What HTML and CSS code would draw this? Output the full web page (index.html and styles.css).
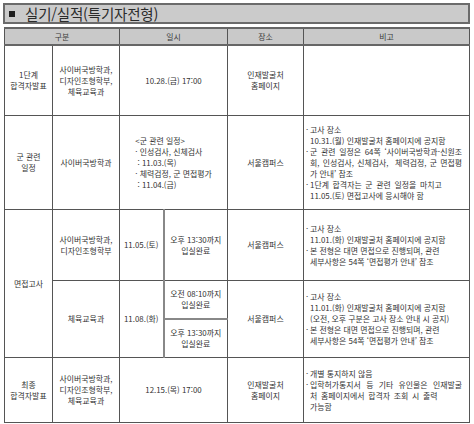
FILE: index.html
```html
<!DOCTYPE html>
<html lang="ko">
<head>
<meta charset="utf-8">
<title>실기/실적(특기자전형)</title>
<link rel="stylesheet" href="styles.css">
</head>
<body>
<div class="page">
  <div class="title"><span class="sq"></span><span class="title-text">실기/실적(특기자전형)</span></div>
  <table class="sched">
    <colgroup>
      <col class="c1"><col class="c2"><col class="c3"><col class="c4"><col class="c5"><col class="c6">
    </colgroup>
    <thead>
      <tr class="r-head">
        <th colspan="2">구분</th>
        <th colspan="2">일시</th>
        <th>장소</th>
        <th>비고</th>
      </tr>
    </thead>
    <tbody>
      <tr class="r1">
        <td>1단계<br>합격자발표</td>
        <td>사이버국방학과,<br>디자인조형학부,<br>체육교육과</td>
        <td colspan="2">10.28.(금) 17:00</td>
        <td>인재발굴처<br>홈페이지</td>
        <td class="note"></td>
      </tr>
      <tr class="r2">
        <td>군 관련<br>일정</td>
        <td>사이버국방학과</td>
        <td colspan="2"><div class="mil">
          <span class="ln">&lt;군 관련 일정&gt;</span>
          <span class="ln">· 인성검사, 신체검사</span>
          <span class="ln">&nbsp;: 11.03.(목)</span>
          <span class="ln">· 체력검정, 군 면접평가</span>
          <span class="ln">&nbsp;: 11.04.(금)</span>
        </div></td>
        <td>서울캠퍼스</td>
        <td class="note">
          <div class="li"><span class="ln"><span class="dot">·</span>고사 장소</span><span class="ln">10.31.(월) 인재발굴처 홈페이지에 공지함</span></div>
          <div class="li"><span class="ln j"><span class="dot">·</span>군 관련 일정은 64쪽 ‘사이버국방학과-신원조</span><span class="ln j">회, 인성검사, 신체검사, &nbsp;체력검정, 군 면접평</span><span class="ln">가 안내’ 참조</span></div>
          <div class="li"><span class="ln wide"><span class="dot">·</span>1단계 합격자는 군 관련 일정을 마치고</span><span class="ln">11.05.(토) 면접고사에 응시해야 함</span></div>
        </td>
      </tr>
      <tr class="r3a">
        <td rowspan="3">면접고사</td>
        <td>사이버국방학과,<br>디자인조형학부</td>
        <td>11.05.(토)</td>
        <td>오후 13:30까지<br>입실완료</td>
        <td>서울캠퍼스</td>
        <td class="note">
          <div class="li"><span class="ln"><span class="dot">·</span>고사 장소</span><span class="ln">11.01.(화) 인재발굴처 홈페이지에 공지함</span></div>
          <div class="li"><span class="ln"><span class="dot">·</span>본 전형은 대면 면접으로 진행되며, 관련</span><span class="ln">세부사항은 54쪽 ‘면접평가 안내’ 참조</span></div>
        </td>
      </tr>
      <tr class="r3b">
        <td rowspan="2">체육교육과</td>
        <td rowspan="2">11.08.(화)</td>
        <td class="split-top">오전 08:10까지<br>입실완료</td>
        <td rowspan="2">서울캠퍼스</td>
        <td rowspan="2" class="note">
          <div class="li"><span class="ln"><span class="dot">·</span>고사 장소</span><span class="ln">11.01.(화) 인재발굴처 홈페이지에 공지함</span><span class="ln">(오전, 오후 구분은 고사 장소 안내 시 공지)</span></div>
          <div class="li"><span class="ln"><span class="dot">·</span>본 전형은 대면 면접으로 진행되며, 관련</span><span class="ln">세부사항은 54쪽 ‘면접평가 안내’ 참조</span></div>
        </td>
      </tr>
      <tr class="r3c">
        <td>오후 13:30까지<br>입실완료</td>
      </tr>
      <tr class="r4">
        <td>최종<br>합격자발표</td>
        <td>사이버국방학과,<br>디자인조형학부,<br>체육교육과</td>
        <td colspan="2">12.15.(목) 17:00</td>
        <td>인재발굴처<br>홈페이지</td>
        <td class="note">
          <div class="li"><span class="ln"><span class="dot">·</span>개별 통지하지 않음</span></div>
          <div class="li"><span class="ln j"><span class="dot">·</span>입학허가통지서 등 기타 유인물은 인재발굴</span><span class="ln wide">처 홈페이지에서 합격자 조회 시 출력</span><span class="ln">가능함</span></div>
        </td>
      </tr>
    </tbody>
  </table>
</div>
</body>
</html>
```
FILE: styles.css
```css
html, body {
  margin: 0;
  padding: 0;
  background: #ffffff;
}
body {
  font-family: "Noto Sans CJK KR", "Noto Sans", sans-serif;
  color: #333333;
}
.page {
  padding: 3px 5px 0 4px;
  width: 465px;
}
.title {
  height: 17px;
  border: 2px solid #6b6b6b;
  background: #cbcbcb;
  display: flex;
  align-items: center;
  padding-left: 4px;
  margin-left: -1px;
  margin-right: -1px;
}
.sq {
  width: 6px;
  height: 6px;
  background: #1e1e1e;
  margin-right: 10px;
}
.title-text {
  font-size: 14.5px;
  line-height: 17px;
  color: #2b2b2b;
  letter-spacing: -0.2px;
}
.sched {
  margin-top: 3px;
  width: 465px;
  border-collapse: collapse;
  table-layout: fixed;
  font-size: 7.9px;
  line-height: 11px;
}
.c1 { width: 48px; }
.c2 { width: 67px; }
.c3 { width: 44px; }
.c4 { width: 64px; }
.c5 { width: 76px; }
.c6 { width: 166px; }
.sched th, .sched td {
  border: 1px solid #555555;
  padding: 0;
  text-align: center;
  vertical-align: middle;
  font-weight: 400;
}
.sched th {
  background: #c9c9c9;
  color: #3a3a3a;
  border-top: 2px solid #666666;
  border-bottom: 2px solid #666666;
}
.r-head { height: 17px; }
.r1 { height: 70px; }
.r2 { height: 94px; }
.r3a { height: 71px; }
.r3b { height: 39px; }
.r3c { height: 38px; }
.r4 { height: 65px; }
.split-top {
  border-bottom: 2px solid #888888 !important;
}
.r3a td:nth-child(4), .split-top, .r3c td {
  border-left: 2px solid #888888 !important;
}
.mil {
  display: inline-block;
  text-align: left;
}
.ln {
  display: block;
  white-space: nowrap;
}
.note {
  text-align: left !important;
  padding: 0 7px 0 6px !important;
}
.dot {
  display: inline-block;
  width: 4px;
  margin-left: -4px;
}
.j {
  text-align: justify;
  text-align-last: justify;
}
.wide {
  word-spacing: 1.5px;
}
```
